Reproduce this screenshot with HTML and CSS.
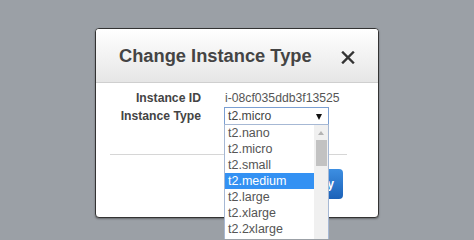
FILE: index.html
```html
<!DOCTYPE html>
<html>
<head>
<meta charset="utf-8">
<link rel="stylesheet" href="styles.css">
</head>
<body>
<div class="modal">
  <div class="modal-header">
    <h1 class="title">Change Instance Type</h1>
    <span class="close" aria-label="Close">
      <svg width="14" height="13" viewBox="0 0 14 13"><path d="M2 1.5 L12 11.5 M12 1.5 L2 11.5" stroke="#333" stroke-width="2.4" stroke-linecap="square" fill="none"/></svg>
    </span>
  </div>
  <div class="modal-body">
    <div class="form-grid">
      <div class="label">Instance ID</div>
      <div class="value">i-08cf035ddb3f13525</div>
      <div class="label">Instance Type</div>
      <div class="select-wrap">
        <div class="select">
          <span>t2.micro</span>
          <span class="arrow"></span>
        </div>
        <div class="dropdown">
          <ul class="options">
            <li>t2.nano</li>
            <li>t2.micro</li>
            <li>t2.small</li>
            <li class="selected">t2.medium</li>
            <li>t2.large</li>
            <li>t2.xlarge</li>
            <li>t2.2xlarge</li>
          </ul>
          <div class="scrollbar">
            <span class="up"></span>
            <span class="thumb"></span>
          </div>
        </div>
      </div>
    </div>
    <div class="divider"></div>
    <div class="footer">
      <button class="btn-primary">Apply</button>
    </div>
  </div>
</div>
</body>
</html>
```

FILE: styles.css
```css
html, body {
  margin: 0;
  padding: 0;
  overflow: hidden;
}
body {
  background: #9ba0a6;
  height: 239px;
  font-family: "Liberation Sans", Arial, sans-serif;
  font-size: 12.2px;
  color: #444;
}
.modal {
  box-sizing: border-box;
  width: 284px;
  height: 190px;
  margin: 28px auto 0;
  background: #fff;
  border: 1px solid #333;
  border-radius: 4px;
  box-shadow: 0 1px 2px rgba(0,0,0,0.35);
}
.modal-header {
  box-sizing: border-box;
  height: 54px;
  border-bottom: 1px solid #cfcfcf;
  border-radius: 3px 3px 0 0;
  background: linear-gradient(#ffffff, #e6e6e6);
  display: flex;
  align-items: center;
  padding: 1px 0 0 23px;
}
.title {
  margin: 0;
  font-size: 18.3px;
  font-weight: bold;
  color: #444;
  flex: 1;
}
.close {
  display: flex;
  margin-right: 23px;
  margin-top: 2px;
}
.modal-body {
  padding-top: 6px;
}
.form-grid {
  display: grid;
  grid-template-columns: 105px 105px;
  column-gap: 23px;
  line-height: 18px;
}
.label {
  text-align: right;
  font-weight: bold;
  color: #444;
  white-space: nowrap;
}
.value {
  color: #555;
  padding-left: 1px;
  white-space: nowrap;
}
.select-wrap {
  position: relative;
}
.select {
  box-sizing: border-box;
  height: 18px;
  border: 1px solid #7b9fd2;
  display: flex;
  align-items: center;
  justify-content: space-between;
  padding: 0 6px 0 3px;
  line-height: 16px;
  color: #444;
}
.arrow {
  width: 0;
  height: 0;
  border-left: 3.5px solid transparent;
  border-right: 3.5px solid transparent;
  border-top: 6px solid #111;
  margin-top: 1px;
}
.dropdown {
  position: absolute;
  top: 17px;
  left: 0;
  width: 105px;
  height: 116px;
  box-sizing: border-box;
  border: 1px solid #a6b8d4;
  border-bottom: none;
  background: #fff;
  display: flex;
  overflow: hidden;
}
.options {
  list-style: none;
  margin: 0;
  padding: 0;
  flex: 1;
}
.options li {
  height: 16px;
  line-height: 16px;
  padding-left: 3px;
  color: #555;
  font-size: 12.5px;
}
.options li.selected {
  background: #3391f3;
  color: #fff;
}
.scrollbar {
  width: 14px;
  background: #f0f0f0;
  display: flex;
  flex-direction: column;
  align-items: center;
}
.up {
  width: 0;
  height: 0;
  border-left: 3.5px solid transparent;
  border-right: 3.5px solid transparent;
  border-bottom: 4px solid #b3b3b3;
  margin-top: 6px;
}
.thumb {
  width: 11px;
  height: 26px;
  background: #c2c2c2;
  margin-top: 5px;
}
.divider {
  height: 1px;
  background: #d6d6d6;
  margin: 29px 31px 0 14px;
}
.footer {
  display: flex;
  justify-content: flex-end;
  padding: 14px 35px 0 0;
}
.btn-primary {
  height: 30px;
  padding: 0 9px;
  border: none;
  border-radius: 4px;
  background: linear-gradient(#3d8fe2, #1c62b8);
  color: #fff;
  font-family: "Liberation Sans", Arial, sans-serif;
  font-size: 12.2px;
  font-weight: bold;
}
```
